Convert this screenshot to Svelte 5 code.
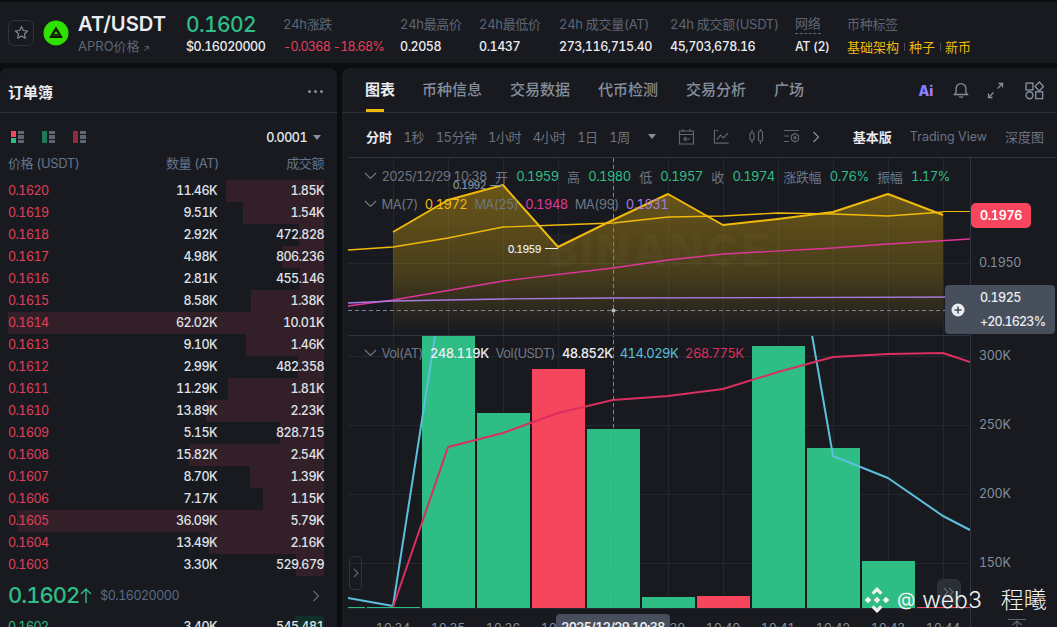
<script>
  const asks = [
    ['0.1620','11.46K','1.85K',226],['0.1619','9.51K','1.54K',243],['0.1618','2.92K','472.828',299],
    ['0.1617','4.98K','806.236',282],['0.1616','2.81K','455.146',300],['0.1615','8.58K','1.38K',251],
    ['0.1614','62.02K','10.01K',8],['0.1613','9.10K','1.46K',246],['0.1612','2.99K','482.358',298],
    ['0.1611','11.29K','1.81K',228],['0.1610','13.89K','2.23K',206],['0.1609','5.15K','828.715',280],
    ['0.1608','15.82K','2.54K',189],['0.1607','8.70K','1.39K',250],['0.1606','7.17K','1.15K',263],
    ['0.1605','36.09K','5.79K',17],['0.1604','13.49K','2.16K',209],['0.1603','3.30K','529.679',296]
  ];
  const tabs = ['币种信息','交易数据','代币检测','交易分析','广场'];
  const times = ['1秒','15分钟','1小时','4小时','1日','1周'];
  const xs = [393,448,503,558,613,668,723,778,833,888,943];
  const bars = [
    [367,53,607,'g'],[422,53,335,'g'],[477,53,413,'g'],[532,53,369,'r'],[587,53,429,'g'],[642,53,597,'g'],
    [697,53,596,'r'],[752,53,346,'g'],[807,53,448,'g'],[862,53,561,'g'],[917,53,607,'r']
  ];
  const price = '393,232 448,200 503,185 558,247 613,220 668,194 723,225 778,219 833,212 888,194 943,215';
  const ma7 = '348,250 393,247 448,238 503,227 558,225 613,223 668,217 723,216 778,213 833,214 888,216 943,212';
  const ma25 = '348,306 393,300 503,281 613,268 668,260 723,254 833,248 888,244 970,239';
  const ma99 = '348,303 393,301 503,299 613,298 970,297';
  const cyan1 = '348,598 393,606 450,240';
  const cyan2 = '778,-100 812,335 833,456 888,478 943,516 970,530';
  const rose = '393,607 448,447 503,433 558,413 613,400 668,396 723,389 778,372 833,357 888,354 943,353 970,362';
  const yAxis = [['0.1950',263],['300K',356],['250K',425],['200K',494],['150K',563]];
  const xLabels = ['10:34','10:35','10:36','10:37','10:38','10:39','10:40','10:41','10:42','10:43','10:44'];
</script>

<div class="page">
  <header class="top">
    <button class="star" aria-label="收藏">
      <svg width="15" height="15" viewBox="0 0 24 24" fill="none" stroke="#848e9c" stroke-width="1.8" stroke-linejoin="round"><path d="M12 2.5l2.9 6.3 6.9.8-5.1 4.7 1.4 6.8-6.1-3.4-6.1 3.4 1.4-6.8-5.1-4.7 6.9-.8z"/></svg>
    </button>
    <svg class="logo" width="26" height="26" viewBox="0 0 26 26"><circle cx="13" cy="13" r="12.5" fill="#2fe000"/><path d="M13 6.5l7 11.5H6z" fill="#0c1a06"/><path d="M13 11l2.8 4.6h-5.6z" fill="#2fe000"/><path d="M11.4 14h3.2l.9 1.6h-5z" fill="#0c1a06"/></svg>
    <div class="sym">
      <div class="pair">AT/USDT</div>
      <div class="sub">APRO价格 <span class="ext">↗</span></div>
    </div>
    <div class="last">
      <div class="lastp">0.1602</div>
      <div class="val">$0.16020000</div>
    </div>
    <div class="stat c1"><div class="lab">24h涨跌</div><div class="val red">-0.0368 -18.68%</div></div>
    <div class="stat c2"><div class="lab">24h最高价</div><div class="val">0.2058</div></div>
    <div class="stat c3"><div class="lab">24h最低价</div><div class="val">0.1437</div></div>
    <div class="stat c4"><div class="lab">24h 成交量(AT)</div><div class="val">273,116,715.40</div></div>
    <div class="stat c5"><div class="lab">24h 成交额(USDT)</div><div class="val">45,703,678.16</div></div>
    <div class="stat c6"><div class="lab dash">网络</div><div class="val">AT (2)</div></div>
    <div class="stat"><div class="lab">币种标签</div><div class="val tags">基础架构<i></i>种子<i></i>新币</div></div>
  </header>

  <main class="main">
    <section class="book">
      <div class="bookhead">
        <h2>订单簿</h2>
        <span class="dots"><b></b><b></b><b></b></span>
      </div>
      <div class="booktools">
        <div class="modes">
          <span class="mode"><span class="mc"><em class="r"></em><em class="g"></em></span><span class="ms"><em></em><em></em><em></em></span></span>
          <span class="mode"><span class="mc"><em class="g dim full"></em></span><span class="ms"><em></em><em></em><em></em></span></span>
          <span class="mode"><span class="mc"><em class="r dim full"></em></span><span class="ms"><em></em><em></em><em></em></span></span>
        </div>
        <div class="tick">0.0001 <span class="caret"></span></div>
      </div>
      <div class="bookcols"><span>价格 (USDT)</span><span>数量 (AT)</span><span>成交额</span></div>
      {#each asks as a}
        <div class="row">
          <div class="depth" style="left:{a[3]}px"></div>
          <span class="p">{a[0]}</span><span class="q">{a[1]}</span><span class="t">{a[2]}</span>
        </div>
      {/each}
      <div class="mid">
        <span class="midp">0.1602</span>
        <svg width="14" height="17" viewBox="0 0 14 17" fill="none" stroke="#2ebd85" stroke-width="1.4"><path d="M7 16V2M2 7l5-5 5 5"/></svg>
        <span class="midu">$0.16020000</span>
        <svg class="midc" width="8" height="12" viewBox="0 0 8 12" fill="none" stroke="#5e6673" stroke-width="1.3"><path d="M1.5 1l5 5-5 5"/></svg>
      </div>
      <div class="row bid">
        <div class="depth gd" style="left:295px"></div>
        <span class="p gt">0.1602</span><span class="q">3.40K</span><span class="t">545.481</span>
      </div>
    </section>

    <section class="panel">
      <nav class="tabs">
        <span class="tab on">图表</span>
        {#each tabs as t}<span class="tab">{t}</span>{/each}
        <div class="tabicons">
          <svg width="20" height="20" viewBox="0 0 20 20"><defs><linearGradient id="aig" x1="0" y1="0" x2="1" y2="1"><stop offset="0" stop-color="#5f86ff"/><stop offset="1" stop-color="#c07bff"/></linearGradient></defs><text x="1.5" y="16" class="ai" fill="url(#aig)">Ai</text></svg>
          <svg width="18" height="18" viewBox="0 0 18 18" fill="none" stroke="#848e9c" stroke-width="1.3"><path d="M2.5 13.5h13l-1.6-2.2V7.500a4.900 4.900 0 0 0-9.800 0v3.800zM7 15.500c.5.800 3.500.800 4 0"/></svg>
          <svg class="ex" width="17" height="17" viewBox="0 0 17 17" fill="none" stroke="#848e9c" stroke-width="1.3"><path d="M1.500 15.500l5-5M10.500 6.500l5-5M11.500 1.500h4v4M5.500 15.500h-4v-4"/></svg>
          <svg class="gr" width="19" height="19" viewBox="0 0 18 18" fill="none" stroke="#848e9c" stroke-width="1.300"><rect x="1" y="2" width="6.500" height="6.500"/><path d="M13.500 1l4 4.200-4 4.200-4-4.200z"/><circle cx="4.300" cy="13.500" r="3.300"/><rect x="10.200" y="10.200" width="6.500" height="6.500"/></svg>
        </div>
      </nav>
      <div class="tools">
        <span class="iv on">分时</span>
        {#each times as t}<span class="iv">{t}</span>{/each}
        <span class="caret dark"></span>
        <div class="ticons">
          <svg width="17" height="17" viewBox="0 0 17 17" fill="none" stroke="#5e6673" stroke-width="1.2"><path d="M1.500 3h14v13h-14zM1.500 6.500h14M5 1v3M12 1v3M12 11H6M8 9l-2 2 2 2"/></svg>
          <svg width="17" height="17" viewBox="0 0 18 17" fill="none" stroke="#5e6673" stroke-width="1.2"><path d="M1.500 1v14.500h15M4 12l4-5 3 3 5-5"/><path d="M2.800 1.500h3l-1.500 2z" fill="#5e6673" stroke="none"/></svg>
          <svg width="17" height="17" viewBox="0 0 16 17" fill="none" stroke="#5e6673" stroke-width="1.2"><rect x="1.500" y="5" width="4" height="7" rx="1"/><rect x="10" y="3" width="4" height="10" rx="1"/><path d="M3.500 2v3M3.500 12v3M12 1v2M12 13v3"/></svg>
          <svg width="17" height="17" viewBox="0 0 17 17" fill="none" stroke="#5e6673" stroke-width="1.2"><path d="M1 2.500h15M1 8h5M1 13.500h5"/><path d="M12 5.500l3.500 2.200v4.100L12 14l-3.500-2.200V7.700z"/><circle cx="12" cy="9.700" r="1"/></svg>
          <svg class="more" width="8" height="12" viewBox="0 0 8 12" fill="none" stroke="#848e9c" stroke-width="1.2"><path d="M1.500 1l5 5-5 5"/></svg>
        </div>
        <div class="views">
          <span class="v on">基本版</span><span class="v tv">Trading View</span><span class="v">深度图</span>
        </div>
      </div>

      <div class="chart">
        <svg class="plot" width="709" height="470" viewBox="348 157 709 470">
          <defs>
            <linearGradient id="area" gradientUnits="userSpaceOnUse" x1="0" y1="185" x2="0" y2="333">
              <stop offset="0" stop-color="#f0b90b" stop-opacity=".38"/>
              <stop offset=".6" stop-color="#f0b90b" stop-opacity=".22"/>
              <stop offset="1" stop-color="#f0b90b" stop-opacity="0"/>
            </linearGradient>
            <clipPath id="pricepane"><rect x="348" y="158" width="622" height="177"/></clipPath>
            <clipPath id="volpane"><rect x="348" y="335" width="622" height="274"/></clipPath>
          </defs>
          {#each xs as x}<line x1={x+.5} x2={x+.5} y1="158" y2="609" class="grid"/>{/each}
          {#each yAxis as y}<line x1="348" x2="970" y1={y[1]+.5} y2={y[1]+.5} class="grid"/>{/each}
          <text x="660" y="266" class="wm" text-anchor="middle">BINANCE</text>

          <g clip-path="url(#pricepane)">
            <polygon points="393,332 {price} 943,332" fill="url(#area)"/>
            <polyline points={ma7} class="ln" stroke="#f0b90b" stroke-width="1.300"/>
            <polyline points={ma25} class="ln" stroke="#e0359b" stroke-width="1.300"/>
            <polyline points={ma99} class="ln" stroke="#a77be0" stroke-width="1.300"/>
            <line x1="943" x2="970" y1="211.500" y2="211.500" stroke="#f0b90b" stroke-width="1"/>
            <polyline points={price} class="ln" stroke="#f0b90b" stroke-width="2"/>
            <line x1="490" x2="503" y1="185.500" y2="185.500" stroke="#848e9c"/>
            <text x="486" y="189" class="mark dimmark" text-anchor="end">0.1992</text>
            <line x1="545" x2="558" y1="248.500" y2="248.500" stroke="#eaecef"/>
            <text x="541" y="253" class="mark" text-anchor="end">0.1959</text>
          </g>
          <line x1="348" x2="945" y1="310.500" y2="310.500" class="cross"/>
          <circle cx="613.500" cy="310.500" r="2" fill="#b7bdc6"/>

          <g clip-path="url(#volpane)">
            <rect x="348" y="607" width="17" height="2" fill="#2ebd85"/>
            {#each bars as b}
              <rect x={b[0]} y={b[2]} width={b[1]} height={609-b[2]} fill={b[3]==='g'?'#2ebd85':'#f6465d'}/>
            {/each}
            <polyline points={cyan1} class="ln" stroke="#5cc0dc" stroke-width="2"/>
            <polyline points={cyan2} class="ln" stroke="#5cc0dc" stroke-width="2"/>
            <polyline points={rose} class="ln" stroke="#d9305f" stroke-width="2"/>
          </g>

          <line x1="613.500" x2="613.500" y1="158" y2="609" class="cross"/>
          <line x1="348" x2="970" y1="335.500" y2="335.500" class="sep"/>
          <line x1="348" x2="970" y1="608.500" y2="608.500" class="grid"/>
          <line x1="970.500" x2="970.500" y1="158" y2="627" class="sep"/>
          <line x1="348" x2="1057" y1="157.500" y2="157.500" class="sep"/>
          <line x1="347.500" x2="347.500" y1="157" y2="627" class="sep"/>

          {#each yAxis as y}<text x="979" y={y[1]+4} class="axis">{y[0]}</text>{/each}
          {#each xLabels as l, i}<text x={xs[i]} y="633" class="axis" text-anchor="middle">{l}</text>{/each}
          <path d="M1008 619.500h18M1017 632v-11M1012.500 625l4.500-4 4.500 4" fill="none" stroke="#5e6673" stroke-width="1.200"/>
        </svg>

        <div class="legend l1">
          <svg class="chev" width="13" height="8" viewBox="0 0 13 8" fill="none" stroke="#6f7683" stroke-width="1.200"><path d="M1 1l5.500 5.500L12 1"/></svg>
          <span class="dt">2025/12/29 10:38</span><span>开</span><b class="gn">0.1959</b><span>高</span><b class="gn">0.1980</b><span>低</span><b class="gn">0.1957</b><span>收</span><b class="gn">0.1974</b><span>涨跌幅</span><b class="gn">0.76%</b><span>振幅</span><b class="gn">1.17%</b>
        </div>
        <div class="legend l2">
          <svg class="chev" width="13" height="8" viewBox="0 0 13 8" fill="none" stroke="#6f7683" stroke-width="1.200"><path d="M1 1l5.500 5.500L12 1"/></svg>
          <span>MA(7)</span><b class="ye">0.1972</b><span>MA(25)</span><b class="pk">0.1948</b><span>MA(99)</span><b class="pu">0.1931</b>
        </div>
        <div class="legend l3">
          <svg class="chev" width="13" height="8" viewBox="0 0 13 8" fill="none" stroke="#6f7683" stroke-width="1.200"><path d="M1 1l5.500 5.500L12 1"/></svg>
          <span>Vol(AT)</span><b class="wh">248.119K</b><span>Vol(USDT)</span><b class="wh">48.852K</b><b class="cy">414.029K</b><b class="ro">268.775K</b>
        </div>

        <div class="pricetag">0.1976</div>
        <div class="crossbox">
          <svg width="14" height="14" viewBox="0 0 14 14"><circle cx="7" cy="7" r="6.500" fill="#eaecef"/><path d="M7 3.500v7M3.500 7h7" stroke="#474d57" stroke-width="1.500"/></svg>
          <div class="cvals"><span>0.1925</span><span class="pct">+20.1623%</span></div>
        </div>
        <div class="timetag">2025/12/29 10:38</div>
        <button class="navl" aria-label="向左"><svg width="6" height="10" viewBox="0 0 6 10" fill="none" stroke="#5e6673" stroke-width="1.200"><path d="M1 1l4 4-4 4"/></svg></button>
        <button class="navr" aria-label="最新"><svg width="12" height="10" viewBox="0 0 12 10" fill="none" stroke="#5e6673" stroke-width="1.200"><path d="M1 1l4 4-4 4M6 1l4 4-4 4"/></svg></button>

        <div class="mark-w">
          <svg width="28" height="28" viewBox="0 0 28 28" fill="#f2f2f2"><path d="M14 1l5.500 5.500-2.300 2.300L14 5.600l-3.200 3.200-2.300-2.300zM14 27l-5.500-5.500 2.300-2.300 3.200 3.200 3.200-3.200 2.300 2.300zM5 10.700L8.300 14 5 17.300 1.700 14zM23 10.700l3.300 3.300-3.300 3.300-3.300-3.300zM14 10.700l3.300 3.300-3.300 3.300-3.300-3.300z"/></svg>
          <span class="at">@</span><span class="webt">web3</span><span class="nm">程曦</span>
        </div>
      </div>
    </section>
  </main>
</div>

<style>
  :global(body) { margin: 0; background: #0b0e11; overflow: hidden; }
  .page {
    width: 1057px; height: 627px; overflow: hidden; background: #0b0e11; color: #eaecef;
    font-family: Inter, "Noto Sans CJK SC", sans-serif; display: flex; flex-direction: column;
    font-variant-numeric: tabular-nums;
  }
  h2 { margin: 0; font: inherit; }
  button { padding: 0; background: none; }

  .top {
    height: 61px; margin-top: 2px; margin-bottom: 5px; flex: none; background: #181a20;
    display: flex; align-items: center; padding: 6px 0 0 8px; box-sizing: border-box;
  }
  .star {
    width: 26px; height: 26px; border: 1px solid #2f343c; border-radius: 6px; flex: none; margin-top: -6px;
    display: flex; align-items: center; justify-content: center;
  }
  .logo { margin-left: 9px; flex: none; margin-top: -6px; }
  .sym { margin-left: 9px; width: 108px; flex: none; margin-top: -4px; }
  .pair { font-size: 20.200px; font-weight: 600; line-height: 24px; }
  .sub { font-size: 13px; color: #5e6673; line-height: 16px; margin-top: 2px; white-space: nowrap; }
  .ext { font-size: 9px; }
  .last { width: 97px; flex: none; margin-top: -4px; }
  .lastp { color: #2ebd85; font-size: 21px; font-weight: 500; line-height: 24px; letter-spacing: -.6px; }
  .val { font-size: 12.500px; font-weight: 500; line-height: 16px; color: #eaecef; white-space: nowrap; letter-spacing: -.45px; }
  .last .val { margin-top: 2px; }
  .stat { flex: none; }
  .lab { font-size: 13px; color: #5e6673; line-height: 16px; height: 16px; margin-bottom: 7px; white-space: nowrap; letter-spacing: -.3px; }
  .lab.dash { width: 26px; border-bottom: 1px dashed #5e6673; height: 18px; margin-bottom: 5px; margin-top: -2px; }
  .red { color: #e0405a; font-weight: 400; letter-spacing: -.7px; }
  .c1 { width: 117px; } .c2 { width: 79px; } .c3 { width: 80px; } .c4 { width: 111px; } .c5 { width: 125px; } .c6 { width: 52px; }
  .tags { color: #f0b90b; display: flex; align-items: center; font-weight: 400; font-size: 13px; letter-spacing: 0; }
  .tags i { width: 1px; height: 8px; background: #474d57; margin: 0 4.500px; }

  .main { flex: 1; display: flex; gap: 5px; min-height: 0; }
  .book {
    width: 337px; flex: none; background: #181a20; border-radius: 8px 8px 0 0; overflow: hidden; position: relative;
  }
  .bookhead {
    height: 45px; box-sizing: border-box; border-bottom: 1px solid #2b3139; display: flex; align-items: center;
    justify-content: space-between; padding: 3px 14px 0 8px; font-size: 15px; font-weight: 600;
  }
  .dots { display: flex; gap: 3px; }
  .dots b { width: 3px; height: 3px; border-radius: 50%; background: #848e9c; }
  .booktools { height: 42px; box-sizing: border-box; display: flex; justify-content: space-between; align-items: center; padding: 6px 16px 0 11px; }
  .modes { display: flex; gap: 17px; }
  .mode { display: flex; gap: 2px; width: 14px; height: 12px; }
  .mc { width: 5px; display: flex; flex-direction: column; gap: 1px; }
  .mc em { flex: 1; display: block; }
  .r { background: #f6465d; } .g { background: #2ebd85; }
  .dim.g { background: #1c7a57; } .dim.r { background: #8d2a3b; }
  .ms { width: 6px; display: flex; flex-direction: column; gap: 1px; }
  .ms em { flex: 1; display: block; background: #5e6673; }
  .tick { font-size: 12.500px; display: flex; align-items: center; gap: 6px; font-weight: 500; letter-spacing: -.5px; }
  .caret { width: 0; height: 0; border: 4px solid transparent; border-top: 5px solid #848e9c; border-bottom: 0; display: block; flex: none; }
  .bookcols {
    display: grid; grid-template-columns: 1fr 80px 107px; padding: 0 13px 0 8px; font-size: 13px; color: #66758c; line-height: 16px;
    height: 25px; letter-spacing: -.4px;
  }
  .bookcols span { white-space: nowrap; }
  .bookcols span:nth-child(2) { position: relative; left: 2px; }
  .bookcols span:nth-child(n+2), .q, .t { text-align: right; }
  .row {
    position: relative; display: grid; grid-template-columns: 1fr 80px 107px; height: 22px; line-height: 22px; padding: 0 13px 0 8px;
    font-size: 12.500px; color: #dfe2e7; font-weight: 500; letter-spacing: -.55px;
  }
  .row span { position: relative; }
  .depth { position: absolute; top: 0; bottom: 0; right: 13px; background: #321f27; }
  .depth.gd { background: #12302a; }
  .p { color: #e0405a; font-weight: 400; }
  .p.gt { color: #2ebd85; }
  .mid { height: 40px; box-sizing: border-box; display: flex; align-items: center; padding: 0 8px 2px; position: relative; }
  .midp { color: #2ebd85; font-size: 22px; font-weight: 500; letter-spacing: -1px; }
  .midu { color: #5b6b85; font-size: 12.500px; margin-left: 7px; letter-spacing: -.5px; }
  .midc { position: absolute; right: 17px; top: 14px; }

  .panel { flex: 1; min-width: 0; background: #181a20; border-radius: 8px 0 0 0; overflow: hidden; display: flex; flex-direction: column; }
  .tabs {
    height: 45px; flex: none; box-sizing: border-box; border-bottom: 1px solid #2b3139; display: flex; align-items: center;
    gap: 28px; padding: 0 13px 0 23px; font-size: 15px; font-weight: 500; color: #848e9c; position: relative;
  }
  .tab { position: relative; height: 44px; line-height: 44px; white-space: nowrap; box-sizing: border-box; }
  .tab.on { color: #eaecef; font-weight: 600; margin-right: -1px; }
  .tab.on::after { content: ""; position: absolute; left: 1px; bottom: 0; width: 18px; height: 3px; background: #f0b90b; }
  .tabicons { margin-left: auto; display: flex; align-items: center; gap: 15px; }
  .ex { margin-left: 2px; } .gr { margin-left: 6px; }
  .ai { font: 800 14px Inter, sans-serif; }
  .tools {
    height: 44px; box-sizing: border-box; flex: none; display: flex; align-items: center; gap: 11.600px; padding: 3px 0 0 24px; font-size: 13px; color: #6b7280; line-height: 18px;
  }
  .iv { white-space: nowrap; letter-spacing: -.5px; }
  .iv.on { letter-spacing: 0; }
  .iv.on, .v.on { color: #eaecef; font-weight: 700; }
  .caret.dark { margin-left: 7px; border-top-color: #848e9c; }
  .ticons { display: flex; align-items: center; gap: 18px; margin-left: 10px; }
  .more { margin-left: -6px; }
  .views { margin-left: auto; display: flex; align-items: center; gap: 18px; padding-right: 13px; }
  .v { white-space: nowrap; }
  .tv { font-size: 12.500px; }

  .chart { position: relative; flex: 1; margin-left: 6px; min-height: 0; overflow: hidden; }
  .plot { position: absolute; left: 0; top: 0; display: block; }
  .grid { stroke: #232730; stroke-width: 1; }
  .sep { stroke: #2f3540; stroke-width: 1; }
  .cross { stroke: #7d8490; stroke-width: 1; stroke-dasharray: 4 3; }
  .ln { fill: none; stroke-linejoin: round; }
  .wm { font: 800 44px Inter, sans-serif; fill: #fff; opacity: .025; letter-spacing: 3px; }
  .mark { font: 500 10.500px Inter, sans-serif; fill: #eaecef; font-variant-numeric: tabular-nums; letter-spacing: -.6px; }
  .mark.dimmark { fill: #848e9c; }
  .axis { font: 400 12.500px Inter, sans-serif; fill: #848e9c; font-variant-numeric: tabular-nums; letter-spacing: -.3px; }

  .legend { position: absolute; left: 16px; display: flex; align-items: center; gap: 8.500px; font-size: 13px; height: 18px; white-space: nowrap; color: #6f7683; letter-spacing: -.3px; }
  .legend b { font-weight: 400; letter-spacing: -.55px; }
  .dt { letter-spacing: -.78px; }
  .chev { margin-right: -4px; }
  .l1 { top: 10px; } .l2 { top: 38px; gap: 7px; } .l3 { top: 187px; gap: 7px; }
  .l2 span, .l3 span { letter-spacing: -.6px; }
  .l2 .chev, .l3 .chev { margin-right: -2.500px; }
  .gn { color: #2ebd85; } .ye { color: #f0b90b; } .pk { color: #e0359b; } .pu { color: #a77be0; }
  b.wh { color: #eaecef; font-weight: 500; } .cy { color: #5cc0dc; } .ro { color: #d9305f; }

  .pricetag {
    position: absolute; left: 623px; top: 46px; width: 60px; height: 25px; line-height: 25px; background: #f6465d; color: #fff;
    border-radius: 5px; font-size: 12.500px; font-weight: 600; text-align: center; letter-spacing: -.3px;
  }
  .crossbox {
    position: absolute; left: 597px; top: 128px; width: 110px; height: 49px; background: #474f5c; border-radius: 4px;
    display: flex; align-items: center; box-sizing: border-box; padding-left: 6px; gap: 15px;
  }
  .cvals { display: flex; flex-direction: column; gap: 6px; font-size: 12.500px; font-weight: 500; line-height: 18px; color: #eaecef; white-space: nowrap; letter-spacing: -.5px; }
  .pct { letter-spacing: -.8px; }
  .timetag {
    position: absolute; left: 208px; top: 457px; width: 114px; height: 30px; background: #474f5c; border-radius: 4px; text-align: center;
    font-size: 12.500px; font-weight: 600; line-height: 28px; color: #eaecef; white-space: nowrap; letter-spacing: -.6px;
  }
  .navl, .navr { position: absolute; border: 1px solid #2f343c; display: flex; align-items: center; justify-content: center; border-radius: 4px; box-sizing: border-box; }
  .navl { left: 1px; top: 399px; width: 13px; height: 34px; }
  .navr { left: 589px; top: 422px; width: 24px; height: 26px; background: #2b2f36; border-radius: 6px; }
  .mark-w { position: absolute; left: 515px; top: 429px; display: flex; align-items: center; color: #f2f2f2; line-height: 28px; white-space: nowrap; }
  .at { font-size: 19px; margin-left: 6px; }
  .webt { font-size: 23px; margin-left: 7px; font-weight: 300; }
  .nm { font-size: 23px; margin-left: 18px; font-weight: 300; }
</style>
